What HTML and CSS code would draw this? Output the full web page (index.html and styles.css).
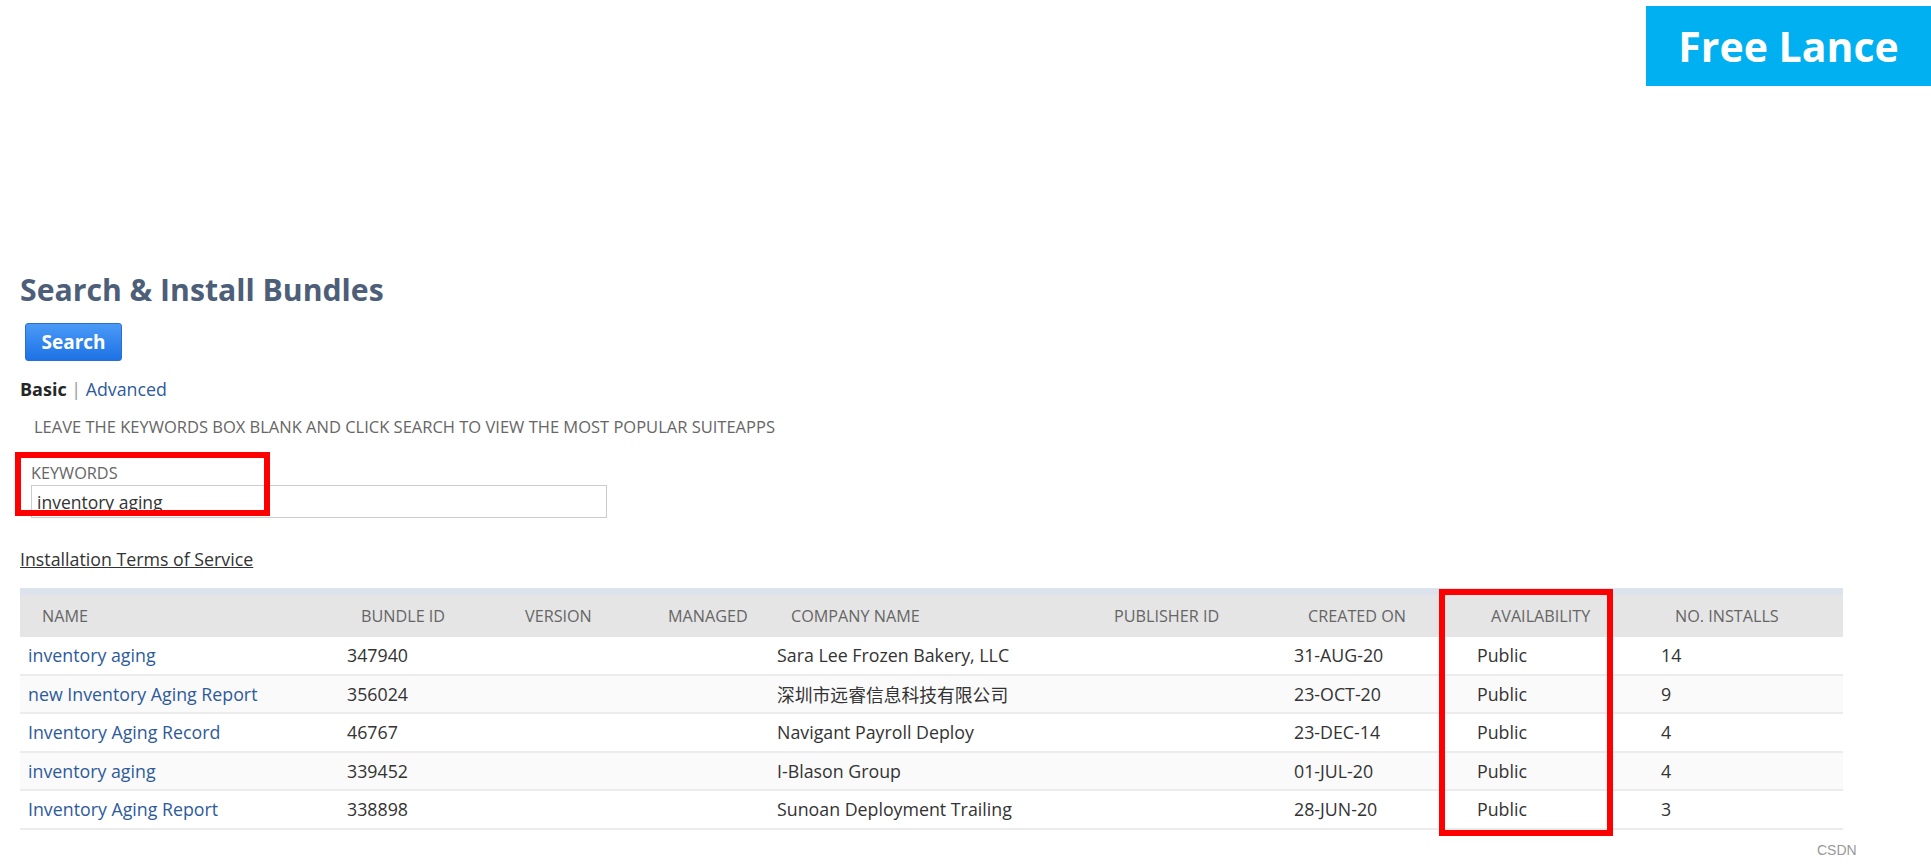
FILE: index.html
```html
<!DOCTYPE html>
<html lang="en">
<head>
    <meta charset="UTF-8">
    <title>Search &amp; Install Bundles</title>
    <link rel="stylesheet" href="styles.css">
</head>
<body>
    <div class="brand">Free Lance</div>

    <h1 class="page-title">Search &amp; Install Bundles</h1>
    <button class="btn-search">Search</button>

    <div class="search-mode">
        <span class="mode-active">Basic</span>
        <span class="mode-sep">|</span>
        <a href="#" class="mode-link">Advanced</a>
    </div>

    <p class="hint">LEAVE THE KEYWORDS BOX BLANK AND CLICK SEARCH TO VIEW THE MOST POPULAR SUITEAPPS</p>

    <div class="field">
        <label for="keywords" class="field-label">KEYWORDS</label>
        <input type="text" id="keywords" class="field-input" value="inventory aging">
        <div class="mark mark-keywords"></div>
    </div>

    <a href="#" class="terms">Installation Terms of Service</a>

    <div class="results">
        <table class="bundles">
            <colgroup>
                <col style="width:319px">
                <col style="width:164px">
                <col style="width:143px">
                <col style="width:123px">
                <col style="width:323px">
                <col style="width:194px">
                <col style="width:183px">
                <col style="width:184px">
                <col style="width:190px">
            </colgroup>
            <thead>
                <tr>
                    <th>NAME</th>
                    <th>BUNDLE ID</th>
                    <th>VERSION</th>
                    <th>MANAGED</th>
                    <th>COMPANY NAME</th>
                    <th>PUBLISHER ID</th>
                    <th>CREATED ON</th>
                    <th>AVAILABILITY</th>
                    <th>NO. INSTALLS</th>
                </tr>
            </thead>
            <tbody>
                <tr>
                    <td><a href="#">inventory aging</a></td>
                    <td>347940</td>
                    <td></td>
                    <td></td>
                    <td>Sara Lee Frozen Bakery, LLC</td>
                    <td></td>
                    <td>31-AUG-20</td>
                    <td>Public</td>
                    <td>14</td>
                </tr>
                <tr>
                    <td><a href="#">new Inventory Aging Report</a></td>
                    <td>356024</td>
                    <td></td>
                    <td></td>
                    <td>深圳市远睿信息科技有限公司</td>
                    <td></td>
                    <td>23-OCT-20</td>
                    <td>Public</td>
                    <td>9</td>
                </tr>
                <tr>
                    <td><a href="#">Inventory Aging Record</a></td>
                    <td>46767</td>
                    <td></td>
                    <td></td>
                    <td>Navigant Payroll Deploy</td>
                    <td></td>
                    <td>23-DEC-14</td>
                    <td>Public</td>
                    <td>4</td>
                </tr>
                <tr>
                    <td><a href="#">inventory aging</a></td>
                    <td>339452</td>
                    <td></td>
                    <td></td>
                    <td>I-Blason Group</td>
                    <td></td>
                    <td>01-JUL-20</td>
                    <td>Public</td>
                    <td>4</td>
                </tr>
                <tr>
                    <td><a href="#">Inventory Aging Report</a></td>
                    <td>338898</td>
                    <td></td>
                    <td></td>
                    <td>Sunoan Deployment Trailing</td>
                    <td></td>
                    <td>28-JUN-20</td>
                    <td>Public</td>
                    <td>3</td>
                </tr>
            </tbody>
        </table>
        <div class="mark mark-availability"></div>
    </div>

    <div class="csdn">CSDN</div>
</body>
</html>
```

FILE: styles.css
```css
body {
    margin: 0;
    padding: 0 0 0 20px;
    font-family: "Open Sans", "Noto Sans CJK SC", sans-serif;
    color: #333;
    background-color: white;
    position: relative;
    min-height: 867px;
}

a {
    color: #2d5a9b;
    text-decoration: none;
}

.brand {
    position: absolute;
    top: 6px;
    right: 0;
    width: 285px;
    height: 80px;
    background-color: #00b0f0;
    color: white;
    font-weight: bold;
    font-size: 41px;
    display: flex;
    align-items: center;
    justify-content: center;
}

.page-title {
    margin: 0;
    padding-top: 270px;
    font-size: 30.2px;
    line-height: 40px;
    font-weight: bold;
    color: #4d5e78;
}

.btn-search {
    margin: 13px 0 0 5px;
    width: 97px;
    height: 38px;
    padding: 0;
    border: 1px solid #2a6fce;
    border-radius: 3px;
    background: linear-gradient(#4a9af6, #1d72e6);
    color: white;
    font-family: "Open Sans", sans-serif;
    font-weight: bold;
    font-size: 19px;
    display: block;
}

.search-mode {
    margin-top: 16px;
    font-size: 17.8px;
    line-height: 24px;
}

.mode-active {
    font-weight: bold;
    font-size: 18px;
    color: #262626;
}

.mode-sep {
    color: #999;
}

.hint {
    margin: 15px 0 0 14px;
    font-size: 16.5px;
    line-height: 22px;
    color: #666;
}

.field {
    position: relative;
    margin-top: 25px;
    padding-left: 11px;
}

.field-label {
    display: block;
    font-size: 16.3px;
    line-height: 20px;
    color: #666;
}

.field-input {
    display: block;
    margin-top: 2px;
    width: 576px;
    height: 33px;
    box-sizing: border-box;
    border: 1px solid #ccc;
    padding: 0 5px;
    font-family: "Open Sans", sans-serif;
    font-size: 17.5px;
    color: #333;
}

.mark {
    position: absolute;
    border: 6px solid #ff0000;
    box-sizing: border-box;
}

.mark-keywords {
    left: -5px;
    top: -11px;
    width: 255px;
    height: 64px;
}

.terms {
    display: inline-block;
    margin-top: 29px;
    font-size: 17.8px;
    line-height: 24px;
    color: #333;
    text-decoration: underline;
}

.results {
    position: relative;
    margin-top: 17px;
    width: 1823px;
}

.bundles {
    width: 1823px;
    table-layout: fixed;
    border-collapse: collapse;
    border-top: 7px solid #dde3ed;
}

.bundles th {
    height: 42px;
    padding: 0 0 0 22px;
    background-color: #e5e5e5;
    text-align: left;
    font-weight: normal;
    font-size: 16.2px;
    color: #666;
    white-space: nowrap;
}

.bundles td {
    height: 36.5px;
    padding: 0 0 0 8px;
    font-size: 17.8px;
    color: #333;
    border-bottom: 2px solid #ececec;
    white-space: nowrap;
}

.bundles tbody tr:nth-child(even) td {
    background-color: #fafafa;
}

.mark-availability {
    left: 1419px;
    top: 1px;
    width: 174px;
    height: 247px;
}

.csdn {
    position: absolute;
    left: 1817px;
    top: 842px;
    font-family: "Liberation Sans", sans-serif;
    font-size: 14px;
    color: #999;
}
```
